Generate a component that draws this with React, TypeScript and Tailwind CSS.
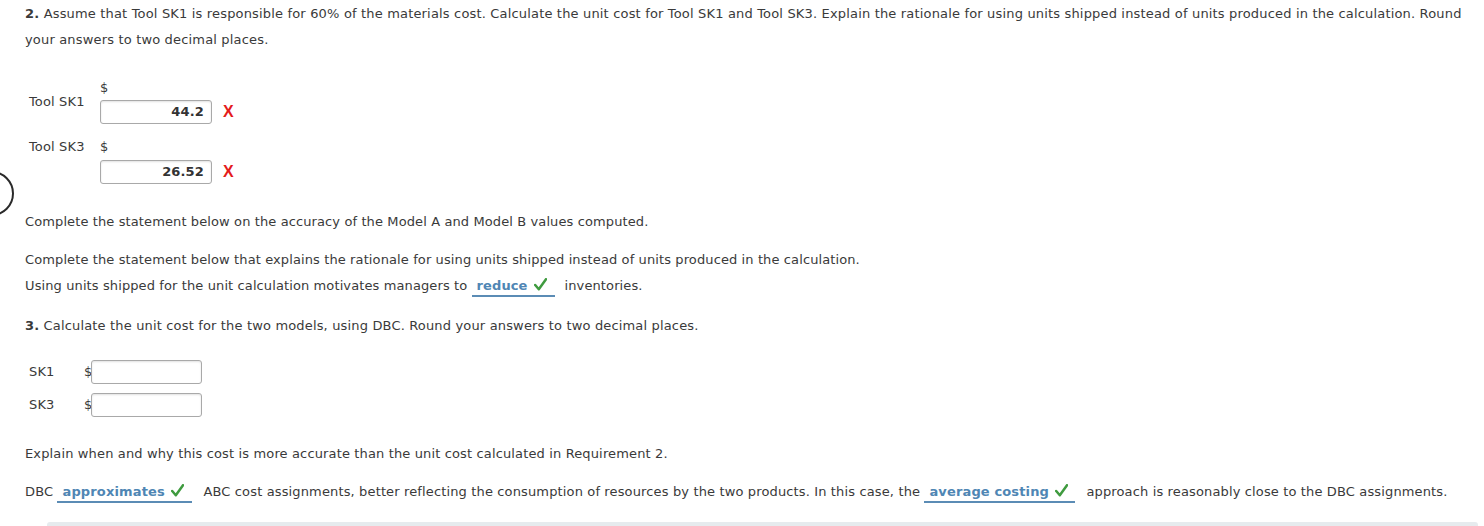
import React from "react";

const font = { fontFamily: '"DejaVu Sans", Verdana, sans-serif' };

function Check() {
  return (
    <svg width="13" height="13" viewBox="0 0 13 13" className="inline-block ml-[6px] align-[-1px]">
      <path d="M1.2 7 L4.8 11.2 L12 1.2" fill="none" stroke="#3f9b3f" strokeWidth="2.5" strokeLinecap="round" strokeLinejoin="round" />
    </svg>
  );
}

function Drop({ text, w }: { text: string; w: string }) {
  return (
    <span className={`inline-block ${w} border-b-2 border-[#5b8cb5] pl-[5px] leading-[18px] font-bold text-[#4f86b4]`}>
      {text}
      <Check />
    </span>
  );
}

function Wrong() {
  return (
    <span className="ml-[11px] text-[16px] font-bold text-[#e41b1b] leading-none" style={{ fontFamily: '"Liberation Sans", Arial, sans-serif' }}>
      X
    </span>
  );
}

function Box({ value, w }: { value?: string; w: string }) {
  return (
    <div className={`${w} h-[24px] rounded-[3px] border border-[#a9a9a9] bg-white shadow-[inset_0_1px_2px_rgba(0,0,0,0.12)] flex items-center justify-end pr-[7px] text-[13px] font-bold text-[#333]`}>
      {value}
    </div>
  );
}

export default function App() {
  return (
    <div className="relative w-[1484px] h-[526px] overflow-hidden bg-white text-[13px] tracking-[0.14px] text-[#3a3a3a]" style={font}>
      <div className="absolute left-[-31px] top-[171px] w-[45px] h-[45px] rounded-full border-2 border-[#2a2a2a]" />
      <div className="pl-[25px] pt-[1px]">
        <p className="leading-[26px] w-[1445px] tracking-[0.17px]">
          <b>2.</b> Assume that Tool SK1 is responsible for 60% of the materials cost. Calculate the unit cost for Tool SK1 and Tool SK3. Explain the rationale for using units shipped instead of units produced in the calculation. Round your answers to two decimal places.
        </p>

        <div className="mt-[27px] pl-[4px] grid grid-cols-[71px_auto] w-fit">
          <div className="pt-[14px] leading-[16px]">Tool SK1</div>
          <div>
            <div className="leading-[16px] h-[16px]">$</div>
            <div className="mt-[4px] flex items-center">
              <Box value="44.2" w="w-[112px]" />
              <Wrong />
            </div>
          </div>
          <div className="pt-[15px] leading-[16px]">Tool SK3</div>
          <div className="pt-[15px]">
            <div className="leading-[16px] h-[16px]">$</div>
            <div className="mt-[5px] flex items-center">
              <Box value="26.52" w="w-[112px]" />
              <Wrong />
            </div>
          </div>
        </div>

        <p className="mt-[25px] leading-[26px] tracking-[0.11px]">Complete the statement below on the accuracy of the Model A and Model B values computed.</p>
        <p className="mt-[12px] leading-[26px] tracking-[0.11px]">Complete the statement below that explains the rationale for using units shipped instead of units produced in the calculation.</p>
        <p className="leading-[26px] tracking-[0.11px]">
          Using units shipped for the unit calculation motivates managers to{" "}
          <Drop text="reduce" w="w-[83px]" />
          <span className="ml-[10px]">inventories.</span>
        </p>
        <p className="mt-[14px] leading-[26px] tracking-[0.16px]">
          <b>3.</b> Calculate the unit cost for the two models, using DBC. Round your answers to two decimal places.
        </p>

        <div className="mt-[21px] pl-[4px] flex flex-col gap-[9px]">
          <div className="flex items-center">
            <span className="w-[55px]">SK1</span>
            <span className="w-[7px]">$</span>
            <Box w="w-[111px]" />
          </div>
          <div className="flex items-center">
            <span className="w-[55px]">SK3</span>
            <span className="w-[7px]">$</span>
            <Box w="w-[111px]" />
          </div>
        </div>

        <p className="mt-[24px] leading-[26px]">Explain when and why this cost is more accurate than the unit cost calculated in Requirement 2.</p>
        <p className="mt-[12px] leading-[26px]">
          DBC <Drop text="approximates" w="w-[135px]" />
          <span className="ml-[11px]">ABC cost assignments, better reflecting the consumption of resources by the two products. In this case, the </span>
          <Drop text="average costing" w="w-[151px]" />
          <span className="ml-[11px]">approach is reasonably close to the DBC assignments.</span>
        </p>
      </div>
      <div className="absolute left-[47px] right-[6px] top-[522px] h-[6px] rounded-t-[3px] bg-[#e6ebee]" />
    </div>
  );
}
